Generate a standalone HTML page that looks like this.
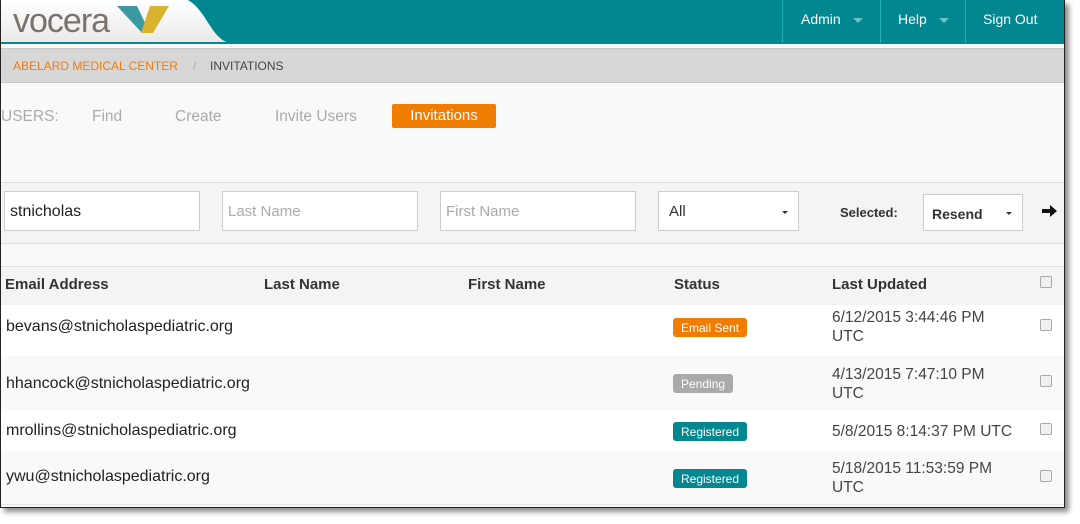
<!DOCTYPE html>
<html><head><meta charset="utf-8"><style>
*{margin:0;padding:0;box-sizing:border-box}
body{width:1080px;height:524px;background:#fff;position:relative;overflow:hidden;font-family:"Liberation Sans",Arial,sans-serif}
.frame{position:absolute;left:0;top:0;width:1065px;height:508px;border:1px solid #222;border-top:none;background:#f9f9f9;overflow:hidden;box-shadow:4px 4px 5px rgba(0,0,0,.45)}
.a{position:absolute}
.hdr{left:0;top:0;width:1065px;height:43px;background:#00878f}
.nav{color:#fff;font-size:14px;top:11px}
.div{top:0;width:1px;height:43px;background:#1fb0b8}
.caret{display:inline-block;width:0;height:0;border-left:5px solid transparent;border-right:5px solid transparent;border-top:5px solid #6cc2c7;vertical-align:middle;margin-left:12px}
.inp{background:#fff;border:1px solid #ccc;height:40px;font-size:15px;padding:11px 5px;color:#aaa}
.th{font-size:15px;font-weight:bold;color:#333;top:276px}
.td{font-size:16px;color:#222}
.lbl{color:#fff;font-size:12px;padding:3px 8px;border-radius:3px;height:19px}
.cb{width:12px;height:12px;border:1px solid #aaa;border-radius:2px;background:#f0f0f0;left:1039px}
.date{font-size:15.5px;color:#444;line-height:19px;left:831px}
.menu{font-size:15.5px;color:#aaa;top:108px}
</style></head><body>
<div class="frame">
<div class="a hdr"></div>
<svg class="a" style="left:0;top:0" width="240" height="44"><defs><linearGradient id="g" x1="0" y1="0" x2="0" y2="1"><stop offset="0" stop-color="#fff"/><stop offset="1" stop-color="#e9e9e9"/></linearGradient></defs><path d="M0 0H187C205 10 210 38 228 43H0Z" fill="url(#g)"/></svg>
<div class="a" style="left:0;top:42px;width:1065px;height:2px;background:#00878f"></div>
<div class="a" style="left:12px;top:2px;font-size:34px;color:#7b726c;letter-spacing:-1px;font-weight:normal">vocera</div>
<svg class="a" style="left:116px;top:5px" width="56" height="28"><path d="M0 1H20L30 22L25 28Z" fill="#3a9aa0"/><path d="M33 1H52L36 28H24Z" fill="#d9b22e"/></svg>
<div class="a div" style="left:781px"></div><div class="a div" style="left:879px"></div><div class="a div" style="left:964px"></div>
<div class="a nav" style="left:800px">Admin<span class="caret"></span></div>
<div class="a nav" style="left:897px">Help<span class="caret"></span></div>
<div class="a nav" style="left:982px">Sign Out</div>
<div class="a" style="left:0;top:48px;width:1065px;height:35px;background:#d7d7d7;border-top:1px solid #c8c8c8;border-bottom:1px solid #c8c8c8"></div>
<div class="a" style="left:12px;top:59px;font-size:12px;color:#f07c10">ABELARD MEDICAL CENTER</div>
<div class="a" style="left:192px;top:59px;font-size:12px;color:#aaa">/</div>
<div class="a" style="left:209px;top:59px;font-size:12px;color:#444">INVITATIONS</div>
<div class="a menu" style="left:0">USERS:</div>
<div class="a menu" style="left:91px">Find</div>
<div class="a menu" style="left:174px">Create</div>
<div class="a menu" style="left:274px">Invite Users</div>
<div class="a" style="left:391px;top:104px;width:104px;height:24px;background:#f07c00;border-radius:2px;color:#fff;font-size:15px;text-align:center;line-height:24px">Invitations</div>
<div class="a" style="left:0;top:182px;width:1065px;height:62px;background:#f4f4f4;border-top:1px solid #ddd;border-bottom:1px solid #ddd"></div>
<div class="a inp" style="left:3px;top:191px;width:196px;color:#222;font-size:16px">stnicholas</div>
<div class="a inp" style="left:221px;top:191px;width:196px">Last Name</div>
<div class="a inp" style="left:439px;top:191px;width:196px">First Name</div>
<div class="a inp" style="left:657px;top:191px;width:141px;color:#333;padding:11px 10px">All<span style="position:absolute;right:10px;top:19px;border-left:3px solid transparent;border-right:3px solid transparent;border-top:3px solid #333"></span></div>
<div class="a" style="left:839px;top:205px;font-size:13px;font-weight:bold;color:#333">Selected:</div>
<div class="a inp" style="left:922px;top:194px;width:100px;height:37px;color:#333;font-weight:bold;font-size:14px;padding:11px 8px">Resend<span style="position:absolute;right:10px;top:17px;border-left:3px solid transparent;border-right:3px solid transparent;border-top:3px solid #333"></span></div>
<svg class="a" style="left:1041px;top:205px" width="16" height="12"><path d="M0 4H8V0L15 6L8 12V8H0Z" fill="#111"/></svg>
<div class="a" style="left:0;top:266px;width:1065px;height:39px;background:#f4f4f4;border-top:1px solid #ddd"></div>
<div class="a th" style="left:4px">Email Address</div>
<div class="a th" style="left:263px">Last Name</div>
<div class="a th" style="left:467px">First Name</div>
<div class="a th" style="left:673px">Status</div>
<div class="a th" style="left:831px">Last Updated</div>
<div class="a cb" style="top:276px"></div>
<div class="a" style="left:0;top:305px;width:1065px;height:51px;background:#fff"></div>
<div class="a" style="left:0;top:356px;width:1065px;height:55px;background:#f9f9f9"></div>
<div class="a" style="left:0;top:411px;width:1065px;height:40px;background:#fff"></div>
<div class="a" style="left:0;top:451px;width:1065px;height:54px;background:#f9f9f9;border-bottom:1px solid #e4e4e4"></div>
<div class="a td" style="left:5px;top:318px">bevans@stnicholaspediatric.org</div>
<div class="a td" style="left:5px;top:375px">hhancock@stnicholaspediatric.org</div>
<div class="a td" style="left:5px;top:422px">mrollins@stnicholaspediatric.org</div>
<div class="a td" style="left:5px;top:468px">ywu@stnicholaspediatric.org</div>
<div class="a lbl" style="left:672px;top:318px;background:#f07c00">Email Sent</div>
<div class="a lbl" style="left:672px;top:374px;background:#aaa">Pending</div>
<div class="a lbl" style="left:672px;top:422px;background:#00878f">Registered</div>
<div class="a lbl" style="left:672px;top:469px;background:#00878f">Registered</div>
<div class="a date" style="top:308px">6/12/2015 3:44:46 PM<br>UTC</div>
<div class="a date" style="top:365px">4/13/2015 7:47:10 PM<br>UTC</div>
<div class="a date" style="top:422px">5/8/2015 8:14:37 PM UTC</div>
<div class="a date" style="top:459px">5/18/2015 11:53:59 PM<br>UTC</div>
<div class="a cb" style="top:319px"></div>
<div class="a cb" style="top:375px"></div>
<div class="a cb" style="top:423px"></div>
<div class="a cb" style="top:470px"></div>
</div>
</body></html>
